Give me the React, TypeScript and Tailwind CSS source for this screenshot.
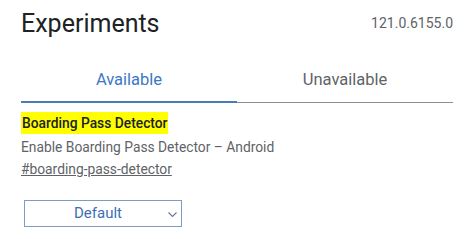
export default function App() {
  return (
    <div
      className="w-[474px] h-[239px] bg-white overflow-hidden pl-[21px] pr-[21px]"
      style={{ fontFamily: 'Roboto, "Liberation Sans", sans-serif' }}
    >
      <div className="flex items-center justify-between h-[44px] pt-[2px]">
        <h1 className="text-[25px] text-[#202124] leading-none">Experiments</h1>
        <span className="text-[14px] text-[#5f6368] leading-none">121.0.6155.0</span>
      </div>

      <div className="grid grid-cols-2 mt-[15px]">
        <div className="flex flex-col items-center">
          <div className="h-[42px] flex items-center text-[16.5px] text-[#3b78c4]">Available</div>
          <div className="w-full h-[2px] bg-[#4a7db5]" />
        </div>
        <div className="flex flex-col items-center">
          <div className="h-[42px] flex items-center text-[16.5px] text-[#5f6368]">Unavailable</div>
          <div className="w-full h-[2px] flex items-end">
            <div className="w-full h-[1.5px] bg-[#8a8d91]" />
          </div>
        </div>
      </div>

      <div className="mt-[9px] flex flex-col items-start">
        <span className="bg-[#ffff00] px-[1px] h-[22px] flex items-center text-[13.8px] font-medium text-[#202124]">
          Boarding Pass Detector
        </span>
        <p className="mt-[4px] text-[13.8px] text-[#5f6368] leading-[18px]">
          Enable Boarding Pass Detector – Android
        </p>
        <a className="mt-[4px] text-[13.8px] text-[#5f6368] underline leading-[18px]">#boarding-pass-detector</a>
        <div className="mt-[22px] ml-[3px] w-[158px] h-[27px] border border-[#7f9bc2] flex items-center relative">
          <span className="flex-1 text-center text-[15px] text-[#3b6fb5] pr-[10px]">Default</span>
          <svg
            className="absolute right-[4px] top-[11px] w-[9px] h-[5px]"
            viewBox="0 0 9 5"
            fill="none"
            stroke="#6b7a90"
            strokeWidth={1.1}
          >
            <path d="M0.5 0.5 L4.5 4.5 L8.5 0.5" />
          </svg>
        </div>
      </div>
    </div>
  );
}
